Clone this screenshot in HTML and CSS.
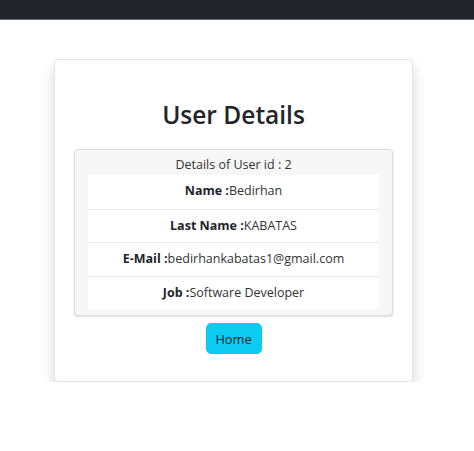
FILE: index.html
```html
<!DOCTYPE html>
<html lang="en">
<head>
<meta charset="utf-8">
<title>User Details</title>
<link rel="stylesheet" href="styles.css">
</head>
<body>
<nav class="topbar"></nav>
<main class="page">
  <section class="card">
    <h2 class="title">User Details</h2>
    <div class="details">
      <div class="details-head">Details of User id : 2</div>
      <ul class="rows">
        <li class="row"><b>Name :</b>Bedirhan</li>
        <li class="row"><b>Last Name :</b>KABATAS</li>
        <li class="row"><b>E-Mail :</b>bedirhankabatas1@gmail.com</li>
        <li class="row"><b>Job :</b>Software Developer</li>
      </ul>
    </div>
    <div class="actions">
      <button class="btn-home" type="button">Home</button>
    </div>
  </section>
</main>
</body>
</html>
```
FILE: styles.css
```css
* { box-sizing: border-box; }
html, body { margin: 0; padding: 0; background: #fff; }
body {
  font-family: "Open Sans", "Noto Sans", "DejaVu Sans", sans-serif;
  font-size: 12.5px;
  color: #212529;
}
.topbar {
  height: 20px;
  background: #212529;
  border-bottom: 1px solid #6c6f73;
}
.page {
  display: flex;
  justify-content: center;
  padding-top: 39px;
  padding-right: 7px;
}
.card {
  width: 359px;
  background: #fff;
  border: 1px solid #e4e4e4;
  border-radius: 4px;
  box-shadow: 0 7px 14px rgba(0, 0, 0, 0.16);
  padding: 38px 19px 27px;
}
.title {
  margin: 0 0 17px;
  text-align: center;
  font-size: 24.5px;
  font-weight: 600;
  line-height: 34px;
  color: #212529;
}
.details {
  background: #f7f7f7;
  border: 1px solid #dcdcdc;
  border-radius: 4px;
  box-shadow: 0 1px 2px rgba(0, 0, 0, 0.14);
  padding: 5px 13px 6px;
}
.details-head {
  text-align: center;
  line-height: 20px;
  color: #333;
}
.rows {
  list-style: none;
  margin: 0;
  padding: 0;
}
.row {
  background: #fff;
  text-align: center;
  height: 33.5px;
  line-height: 32.5px;
  border-top: 1px solid #e8e8e8;
  color: #333;
}
.row:first-child { border-top: 0; }
.row b { font-weight: 700; color: #212529; }
.actions {
  display: flex;
  justify-content: center;
  padding-top: 7px;
}
.btn-home {
  font-family: inherit;
  font-size: 12.8px;
  color: #0b2a33;
  background: #0dcaf0;
  border: 1px solid #0dcaf0;
  border-radius: 5px;
  width: 56px;
  height: 31px;
  padding: 0;
  cursor: pointer;
}
```
